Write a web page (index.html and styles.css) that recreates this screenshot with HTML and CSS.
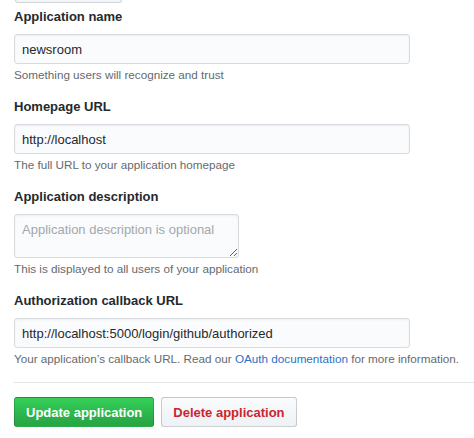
FILE: index.html
```html
<!DOCTYPE html>
<html>
<head>
<meta charset="utf-8">
<link rel="stylesheet" href="styles.css">
</head>
<body>
<div class="page">
  <div class="prev-btn"></div>
  <form class="app-form">
    <div class="form-group">
      <label class="label">Application name</label>
      <input class="input" type="text" value="newsroom">
      <p class="note">Something users will recognize and trust</p>
    </div>
    <div class="form-group">
      <label class="label">Homepage URL</label>
      <input class="input" type="text" value="http://localhost">
      <p class="note">The full URL to your application homepage</p>
    </div>
    <div class="form-group">
      <label class="label">Application description</label>
      <textarea class="input textarea" placeholder="Application description is optional"></textarea>
      <p class="note">This is displayed to all users of your application</p>
    </div>
    <div class="form-group">
      <label class="label">Authorization callback URL</label>
      <input class="input" type="text" value="http://localhost:5000/login/github/authorized">
      <p class="note">Your application’s callback URL. Read our <a class="link" href="#">OAuth documentation</a> for more information.</p>
    </div>
    <hr class="rule">
    <div class="actions">
      <button type="button" class="btn btn-primary">Update application</button>
      <button type="button" class="btn btn-danger">Delete application</button>
    </div>
  </form>
</div>
</body>
</html>
```

FILE: styles.css
```css
html, body {
  margin: 0;
  padding: 0;
  background: #ffffff;
}
body {
  font-family: "Liberation Sans", Arial, sans-serif;
  color: #24292e;
  font-size: 13px;
}
.page {
  padding-left: 14px;
}
.prev-btn {
  width: 105px;
  height: 2px;
  margin-left: 1px;
  border: 1px solid #d1d5da;
  border-top: none;
  border-radius: 0 0 3px 3px;
  background: #f3f5f7;
}
.app-form {
  display: flex;
  flex-direction: column;
  padding-top: 4px;
}
.form-group {
  display: flex;
  flex-direction: column;
  align-items: flex-start;
  margin-bottom: 14px;
}
.label {
  font-weight: bold;
  font-size: 13px;
  line-height: 20px;
  margin-bottom: 7px;
  color: #24292e;
}
.input {
  box-sizing: border-box;
  width: 396px;
  height: 30px;
  margin: 0;
  padding: 0 7px;
  font-family: "Liberation Sans", Arial, sans-serif;
  font-size: 13px;
  color: #24292e;
  background: #fafbfc;
  border: 1px solid #d7dadf;
  border-radius: 3px;
  box-shadow: inset 0 1px 2px rgba(27, 31, 35, 0.06);
  outline: none;
}
.textarea {
  width: 225px;
  height: 44px;
  padding: 6px 7px;
  line-height: 17px;
  resize: vertical;
  display: block;
}
.textarea::placeholder {
  color: #a3a8ae;
}
.note {
  margin: 3px 0 0;
  font-size: 11.7px;
  line-height: 16px;
  color: #666a6f;
}
.link {
  color: #2a72c8;
  text-decoration: none;
}
.rule {
  margin: 1px 0 14px;
  border: none;
  border-top: 1px solid #e1e4e8;
  height: 0;
}
.actions {
  display: flex;
  gap: 7px;
}
.btn {
  box-sizing: border-box;
  height: 30px;
  padding: 0 11px;
  font-family: "Liberation Sans", Arial, sans-serif;
  font-size: 13px;
  font-weight: bold;
  border-radius: 3px;
  border: 1px solid rgba(27, 31, 35, 0.2);
  cursor: pointer;
  white-space: nowrap;
}
.btn-primary {
  color: #ffffff;
  background-image: linear-gradient(-180deg, #34d058 0%, #28a745 90%);
}
.btn-danger {
  color: #cb2431;
  background-image: linear-gradient(-180deg, #fafbfc 0%, #eff3f6 90%);
}
```
